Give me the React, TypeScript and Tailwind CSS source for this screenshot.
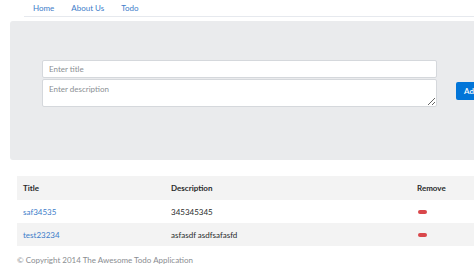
export default function App() {
  const todos = [
    { title: 'saf34535', desc: '345345345' },
    { title: 'test23234', desc: 'asfasdf asdfsafasfd' },
  ];

  return (
    <div
      className="w-[474px] h-[271px] overflow-hidden bg-white text-[8px] text-[#292b2c]"
      style={{ fontFamily: 'Lato, "Open Sans", "Liberation Sans", sans-serif' }}
    >
      <nav className="ml-[24px] h-[17px] border-b border-[#e6e9ee] flex items-center pl-[9px] gap-[17px] text-[#3d7cc9]">
        <a>Home</a>
        <a>About Us</a>
        <a>Todo</a>
      </nav>

      <section className="mt-[4px] ml-[10px] w-[480px] h-[139px] bg-[#eaebed] rounded-[3px] pl-[32px] flex items-center gap-[19px]">
        <div className="flex flex-col gap-px w-[395px] -mt-[14px]">
          <input
            placeholder="Enter title"
            className="h-[18px] bg-white border border-[#d5d8dc] rounded-[2px] px-[6px] text-[8px] placeholder:text-[#8b8f94] outline-none"
          />
          <textarea
            placeholder="Enter description"
            className="h-[28px] bg-white border border-[#d5d8dc] rounded-[2px] px-[6px] pt-[3px] text-[8px] placeholder:text-[#8b8f94] outline-none resize-y"
          />
        </div>
        <button className="h-[18px] px-[8px] bg-[#0275d8] text-white font-semibold rounded-[2px]">
          Add
        </button>
      </section>

      <table className="mt-[16px] ml-[17px] w-[470px] border-collapse">
        <thead>
          <tr className="bg-[#f3f3f3] h-[24px] text-left">
            <th className="pl-[6px] w-[154px] font-bold">Title</th>
            <th className="w-[246px] font-bold">Description</th>
            <th className="font-bold">Remove</th>
          </tr>
        </thead>
        <tbody>
          {todos.map((t, i) => (
            <tr key={i} className={i % 2 === 1 ? 'bg-[#f3f3f3] h-[23px]' : 'h-[23px]'}>
              <td className="pl-[6px] text-[#3d7cc9]">{t.title}</td>
              <td>{t.desc}</td>
              <td>
                <span className="block ml-[1px] w-[9px] h-[4px] rounded-full bg-[#d9474b]" />
              </td>
            </tr>
          ))}
        </tbody>
      </table>

      <footer className="ml-[17px] mt-[8px] text-[#8a8d91]">
        © Copyright 2014 The Awesome Todo Application
      </footer>
    </div>
  );
}
